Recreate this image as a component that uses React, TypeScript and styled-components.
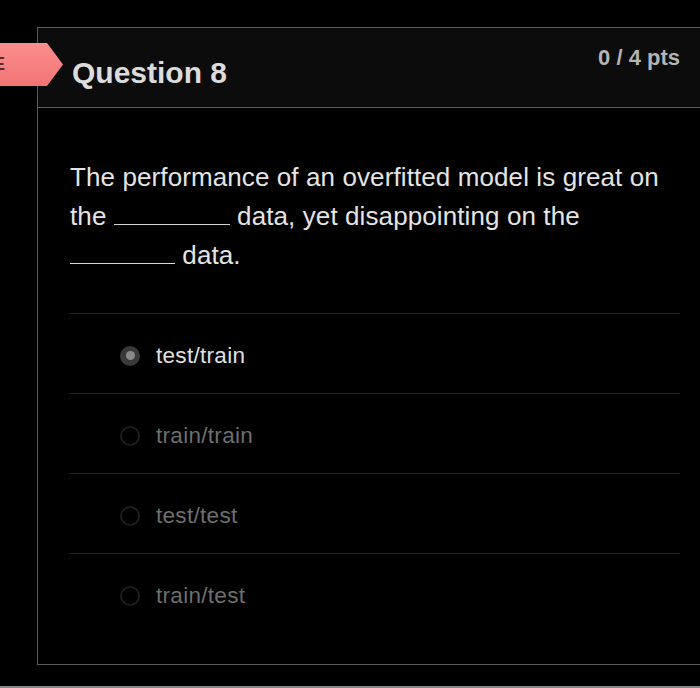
import styled, { createGlobalStyle } from 'styled-components'

interface Option {
  label: string
  selected: boolean
}

const options: Option[] = [
  { label: 'test/train', selected: true },
  { label: 'train/train', selected: false },
  { label: 'test/test', selected: false },
  { label: 'train/test', selected: false },
]

const App = () => {
  return (
    <>
      <GlobalStyle />
      <Page>
        <Card>
          <Tag>
            <span>E</span>
          </Tag>
          <Header>
            <Title>Question 8</Title>
            <Points>0 / 4 pts</Points>
          </Header>
          <Body>
            <QuestionText>
              The performance of an overfitted model is great on the{' '}
              <Blank width={116} /> data, yet disappointing on the{' '}
              <Blank width={105} /> data.
            </QuestionText>
            <OptionList>
              {options.map((opt) => (
                <OptionRow key={opt.label}>
                  <Radio selected={opt.selected} />
                  <OptionLabel selected={opt.selected}>{opt.label}</OptionLabel>
                </OptionRow>
              ))}
            </OptionList>
          </Body>
        </Card>
        <Footer />
      </Page>
    </>
  )
}

const GlobalStyle = createGlobalStyle`
  html, body {
    margin: 0;
    padding: 0;
    background: #000;
    overflow: hidden;
  }
  body {
    font-family: "Liberation Sans", Arial, sans-serif;
  }
`

const Page = styled.div`
  width: 700px;
  height: 688px;
  padding: 27px 0 0 37px;
  box-sizing: border-box;
  display: flex;
  flex-direction: column;
  overflow: hidden;
`

const Card = styled.div`
  position: relative;
  border: 1.5px solid #5a5a5a;
  border-right: none;
  box-sizing: border-box;
  background: #000;
`

const Tag = styled.div`
  position: absolute;
  left: -38px;
  top: 15px;
  width: 63px;
  height: 43px;
  background: linear-gradient(#fb8e8e, #f27474);
  clip-path: polygon(0 0, 47px 0, 63px 50%, 47px 100%, 0 100%);
  display: flex;
  align-items: center;
  span {
    margin-left: -7px;
    font-size: 18px;
    font-weight: 700;
    color: #5a2a2a;
  }
`

const Header = styled.div`
  height: 79px;
  background: #0c0c0c;
  border-bottom: 1.5px solid #5a5a5a;
  display: flex;
  justify-content: space-between;
  align-items: flex-start;
  padding: 0 20px 0 34px;
`

const Title = styled.div`
  margin-top: 27px;
  font-size: 30px;
  font-weight: 700;
  line-height: 36px;
  color: #dcdcdc;
`

const Points = styled.div`
  margin-top: 17px;
  font-size: 22px;
  font-weight: 700;
  line-height: 26px;
  color: #b4b4b4;
`

const Body = styled.div`
  padding: 50px 20px 31px 32px;
`

const QuestionText = styled.p`
  margin: 0 0 38px;
  font-size: 26px;
  line-height: 39px;
  letter-spacing: 0.1px;
  color: #e4e4e4;
`

const Blank = styled.span<{ width: number }>`
  display: inline-block;
  width: ${({ width }) => width}px;
  height: 1px;
  border-bottom: 1.5px solid #d8d8d8;
  vertical-align: baseline;
`

const OptionList = styled.div`
  display: flex;
  flex-direction: column;
`

const OptionRow = styled.div`
  height: 80px;
  border-top: 1.5px solid #262626;
  display: flex;
  align-items: center;
  gap: 16px;
  padding-left: 50px;
  padding-top: 4px;
  box-sizing: border-box;
`

const Radio = styled.div<{ selected: boolean }>`
  width: 20px;
  height: 20px;
  border-radius: 50%;
  box-sizing: border-box;
  display: flex;
  align-items: center;
  justify-content: center;
  background: ${({ selected }) => (selected ? '#3a3a3a' : 'transparent')};
  border: ${({ selected }) => (selected ? 'none' : '2px solid #1e1e1e')};
  &::after {
    content: '';
    display: ${({ selected }) => (selected ? 'block' : 'none')};
    width: 9px;
    height: 9px;
    border-radius: 50%;
    background: #8a8a8a;
  }
`

const OptionLabel = styled.span<{ selected: boolean }>`
  font-size: 22.5px;
  letter-spacing: 0.3px;
  color: ${({ selected }) => (selected ? '#e0e0e0' : '#6e6e6e')};
`

const Footer = styled.div`
  margin-top: auto;
  margin-left: -37px;
  height: 2px;
  background: #8a8a8a;
`

export default App
